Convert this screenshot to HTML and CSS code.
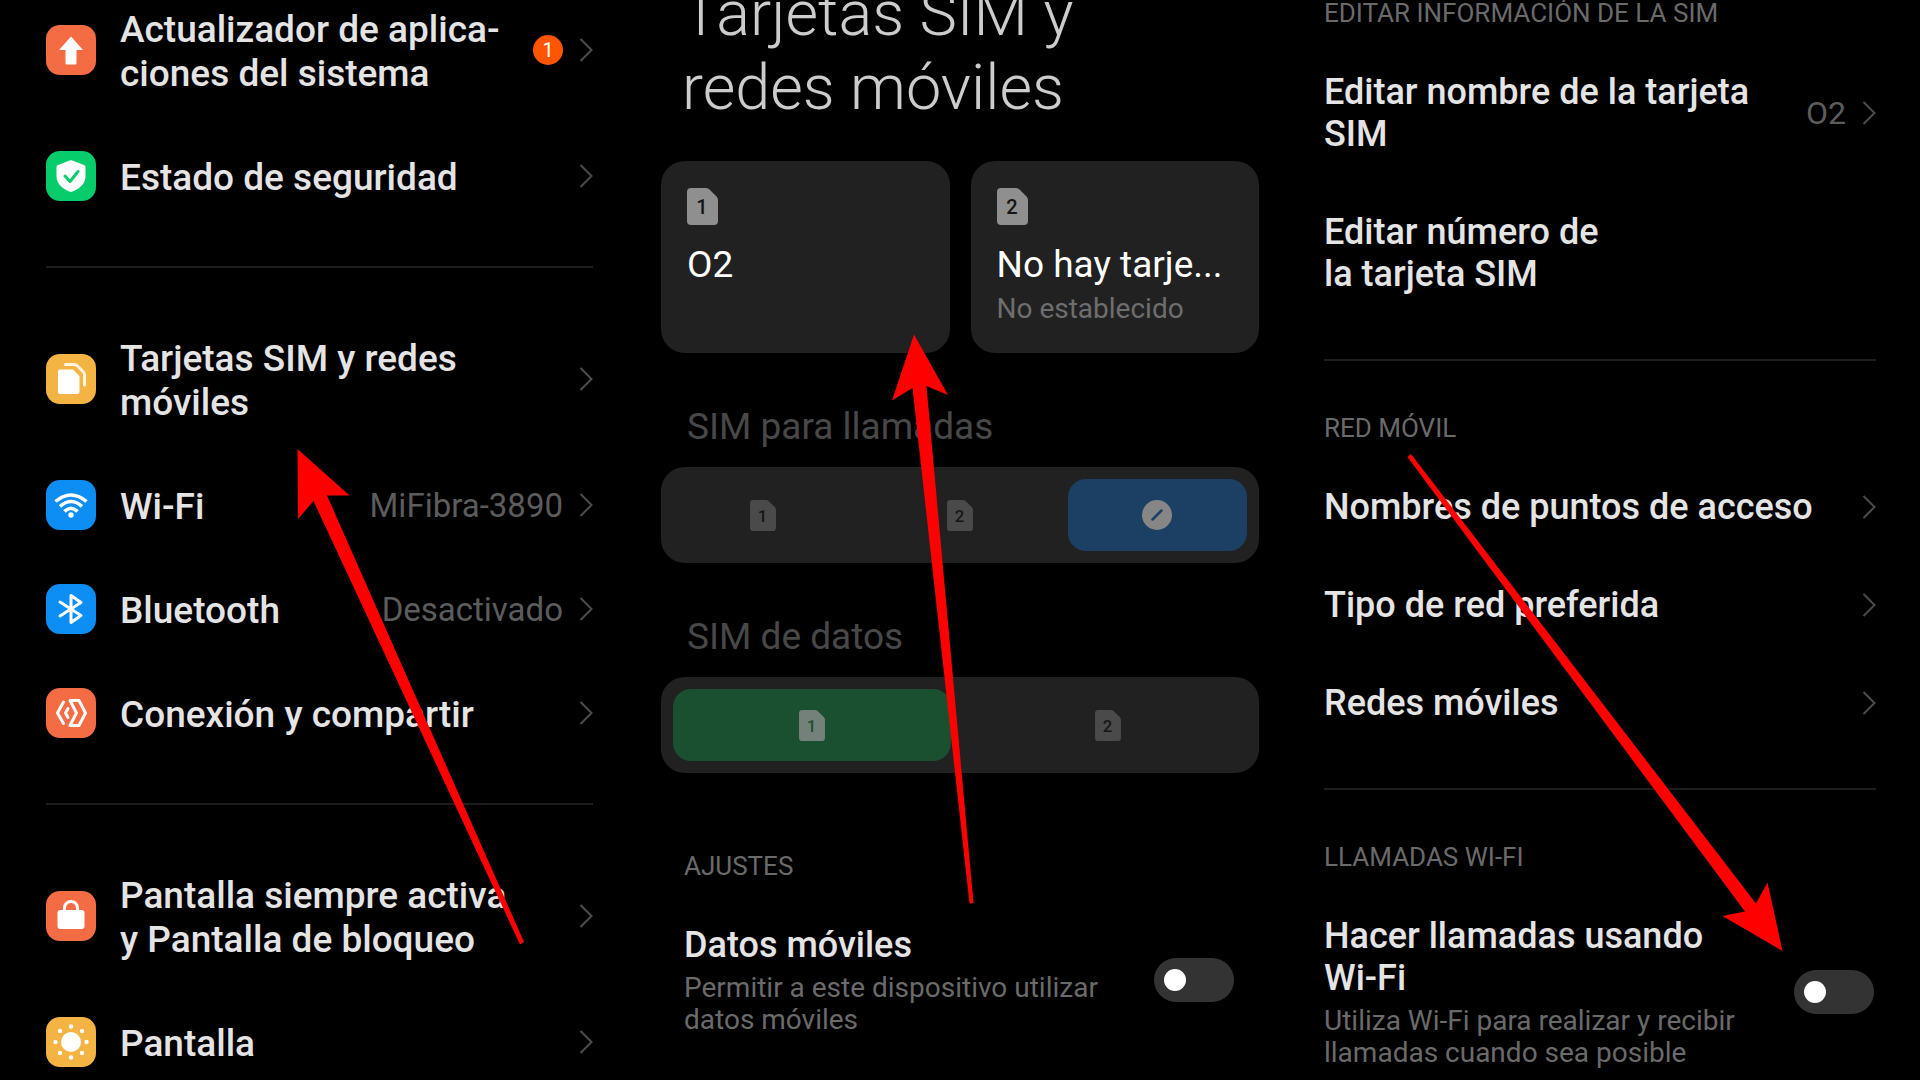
FILE: index.html
```html
<!DOCTYPE html>
<html lang="es">
<head>
    <meta charset="UTF-8">
    <meta name="viewport" content="width=device-width, initial-scale=1.0">
    <title>Ajustes - Llamadas Wi-Fi</title>
    <link rel="stylesheet" href="styles.css">
</head>
<body>
    <!-- Shared shapes -->
    <svg class="defs" aria-hidden="true">
        <symbol id="chevron" viewBox="0 0 14 24"><path d="M1.500 1L12.500 12L1.500 23" fill="none" stroke="#4c4c4c" stroke-width="2"/></symbol>
        <symbol id="sim" viewBox="0 0 31 37"><path d="M4 0H19Q21 0 22.500 1.500L29.500 8.500Q31 10 31 12V33a4 4 0 0 1-4 4H4a4 4 0 0 1-4-4V4a4 4 0 0 1 4-4z"/></symbol>
    </svg>

    <main class="screens">
        <!-- Settings -->
        <section class="screen settings">
            <a class="row" href="#">
                <svg class="icon orange" viewBox="0 0 50 50"><path d="M25 11.500L37 25H30.500V38a1.500 1.500 0 0 1-1.500 1.500H21a1.500 1.500 0 0 1-1.500-1.500V25H13z" fill="#fff"/></svg>
                <span class="label">Actualizador de aplica&shy;ciones del sistema</span>
                <span class="badge">1</span>
                <svg class="chevron"><use href="#chevron"/></svg>
            </a>
            <a class="row" href="#">
                <svg class="icon green" viewBox="0 0 50 50"><path d="M25 9L38 14Q39.500 14.500 39.500 16V25C39.500 33 33 38.500 25 41C17 38.500 10.500 33 10.500 25V16Q10.500 14.500 12 14z" fill="#fff"/><path d="M19 25L24 30.500L32 20.500" fill="none" stroke="#06cc6c" stroke-width="3" stroke-linecap="round" stroke-linejoin="round"/></svg>
                <span class="label">Estado de seguridad</span>
                <svg class="chevron"><use href="#chevron"/></svg>
            </a>
            <hr>
            <a class="row" href="#">
                <svg class="icon yellow" viewBox="0 0 50 50"><path d="M14 15.500H27L33.500 22V38a2 2 0 0 1-2 2H14a2 2 0 0 1-2-2V17.500a2 2 0 0 1 2-2z" fill="#fff"/><path d="M19.500 10.500H28Q30 10.500 31.500 12L37 17.500Q38.500 19 38.500 21V31" fill="none" stroke="#fff6e0" stroke-width="3" stroke-linecap="round"/></svg>
                <span class="label">Tarjetas SIM y redes móviles</span>
                <svg class="chevron"><use href="#chevron"/></svg>
            </a>
            <a class="row" href="#">
                <svg class="icon blue" viewBox="0 0 50 50"><g fill="none" stroke="#fff" stroke-width="3.500"><path d="M9.500 21.500Q25 8.500 40.500 21.500"/><path d="M14 26.500Q25 16.500 36 26.500"/><path d="M18.500 31.500Q25 25 31.500 31.500"/></g><circle cx="25" cy="35" r="2.700" fill="#fff"/></svg>
                <span class="label">Wi-Fi</span>
                <span class="value">MiFibra-3890</span>
                <svg class="chevron"><use href="#chevron"/></svg>
            </a>
            <a class="row" href="#">
                <svg class="icon blue" viewBox="0 0 50 50"><path d="M14 18L35 31.500L25 38.500V11.500L35 18.500L14 32" fill="none" stroke="#fff" stroke-width="3" stroke-linecap="round" stroke-linejoin="round"/></svg>
                <span class="label">Bluetooth</span>
                <span class="value">Desactivado</span>
                <svg class="chevron"><use href="#chevron"/></svg>
            </a>
            <a class="row" href="#">
                <svg class="icon orange" viewBox="0 0 50 50"><g fill="none" stroke="#fff" stroke-width="3" stroke-linecap="round" stroke-linejoin="round"><path d="M17.500 14L11.500 25L17.500 35.500"/><path d="M24 12.500H33L39.500 25L33 37.500H24L30.500 25z"/><path d="M22 20.500L19.500 25L22 29.500"/></g></svg>
                <span class="label">Conexión y compartir</span>
                <svg class="chevron"><use href="#chevron"/></svg>
            </a>
            <hr>
            <a class="row" href="#">
                <svg class="icon orange" viewBox="0 0 50 50"><rect x="11.500" y="19" width="27" height="19" rx="3" fill="#fff"/><path d="M18.500 21V17a6.500 6.500 0 0 1 13 0V21" fill="none" stroke="#fff" stroke-width="3"/></svg>
                <span class="label">Pantalla siempre activa<br>y Pantalla de bloqueo</span>
                <svg class="chevron"><use href="#chevron"/></svg>
            </a>
            <a class="row" href="#">
                <svg class="icon yellow" viewBox="0 0 50 50"><g fill="#fff"><circle cx="25" cy="25" r="10"/><circle cx="25" cy="9.500" r="2.200"/><circle cx="25" cy="40.500" r="2.200"/><circle cx="9.500" cy="25" r="2.200"/><circle cx="40.500" cy="25" r="2.200"/><circle cx="14" cy="14" r="2.200"/><circle cx="36" cy="14" r="2.200"/><circle cx="14" cy="36" r="2.200"/><circle cx="36" cy="36" r="2.200"/></g></svg>
                <span class="label">Pantalla</span>
                <svg class="chevron"><use href="#chevron"/></svg>
            </a>
        </section>

        <!-- SIM cards -->
        <section class="screen sims">
            <h1>Tarjetas SIM y<br>redes móviles</h1>
            <div class="cards">
                <button class="card" type="button">
                    <svg class="card-sim" viewBox="0 0 31 37"><use href="#sim"/><text x="15" y="26">1</text></svg>
                    <span class="card-name">O2</span>
                </button>
                <button class="card" type="button">
                    <svg class="card-sim" viewBox="0 0 31 37"><use href="#sim"/><text x="15" y="26">2</text></svg>
                    <span class="card-name">No hay tarje...</span>
                    <span class="card-note">No establecido</span>
                </button>
            </div>

            <fieldset class="picker" disabled>
                <legend>SIM para llamadas</legend>
                <div class="segments">
                    <label><input type="radio" name="calls" aria-label="SIM 1"><svg class="seg-sim" viewBox="0 0 31 37"><use href="#sim"/><text x="15" y="26">1</text></svg></label>
                    <label><input type="radio" name="calls" aria-label="SIM 2"><svg class="seg-sim" viewBox="0 0 31 37"><use href="#sim"/><text x="15" y="26">2</text></svg></label>
                    <label class="on-blue"><input type="radio" name="calls" aria-label="Ninguna" checked><svg class="seg-none" viewBox="0 0 30 30"><circle cx="15" cy="15" r="15" fill="#868686"/><path d="M10.500 19.500L19.500 10.500" stroke="#1c4064" stroke-width="2.500" stroke-linecap="round"/></svg></label>
                </div>
            </fieldset>
            <fieldset class="picker" disabled>
                <legend>SIM de datos</legend>
                <div class="segments">
                    <label class="on-green"><input type="radio" name="data" aria-label="SIM 1" checked><svg class="seg-sim" viewBox="0 0 31 37"><use href="#sim"/><text x="15" y="26">1</text></svg></label>
                    <label><input type="radio" name="data" aria-label="SIM 2"><svg class="seg-sim" viewBox="0 0 31 37"><use href="#sim"/><text x="15" y="26">2</text></svg></label>
                </div>
            </fieldset>

            <div class="group">
                <h2>AJUSTES</h2>
                <label class="row">
                    <span class="text">
                        <span class="label">Datos móviles</span>
                        <span class="note">Permitir a este dispositivo utilizar datos móviles</span>
                    </span>
                    <input class="switch" type="checkbox" role="switch">
                </label>
            </div>
        </section>

        <!-- SIM details -->
        <section class="screen details">
            <h2>EDITAR INFORMACIÓN DE LA SIM</h2>
            <a class="row" href="#">
                <span class="label">Editar nombre de la tarjeta SIM</span>
                <span class="value">O2</span>
                <svg class="chevron"><use href="#chevron"/></svg>
            </a>
            <a class="row" href="#">
                <span class="label">Editar número de<br>la tarjeta SIM</span>
            </a>
            <hr>
            <h2>RED MÓVIL</h2>
            <a class="row" href="#">
                <span class="label">Nombres de puntos de acceso</span>
                <svg class="chevron"><use href="#chevron"/></svg>
            </a>
            <a class="row" href="#">
                <span class="label">Tipo de red preferida</span>
                <svg class="chevron"><use href="#chevron"/></svg>
            </a>
            <a class="row" href="#">
                <span class="label">Redes móviles</span>
                <svg class="chevron"><use href="#chevron"/></svg>
            </a>
            <hr>
            <h2>LLAMADAS WI-FI</h2>
            <label class="row">
                <span class="text">
                    <span class="label">Hacer llamadas usando<br>Wi-Fi</span>
                    <span class="note">Utiliza Wi-Fi para realizar y recibir llamadas cuando sea posible</span>
                </span>
                <input class="switch" type="checkbox" role="switch">
            </label>
        </section>
    </main>

    <!-- Arrows that mark each step -->
    <svg class="arrows" viewBox="0 0 1920 1080" aria-hidden="true">
        <path d="M297.500 449L349.500 495.500L327 495.500L524 942L520 944.500L313.500 501L298 519z"/>
        <path d="M914 334.500L948 395L926.500 386L973.500 903L969.500 903.500L912.500 388L892 400.500z"/>
        <path d="M1782.500 951L1722.500 916L1745 911.500L1407.500 457L1411 454L1756 903.500L1767.500 882.500z"/>
    </svg>
</body>
</html>
```

FILE: styles.css
```css
* {
    box-sizing: border-box;
}
body {
    margin: 0;
    height: 100vh;
    overflow: hidden;
    background-color: #000;
    color: #e4e4e4;
    font-family: Roboto, "Liberation Sans", sans-serif;
}
.defs {
    display: none;
}
.screens {
    display: grid;
    grid-template-columns: repeat(3, minmax(0, 1fr));
}

/* Each screen is scrolled a little past its top */
.settings {
    margin-top: -24px;
    padding: 0 47px 0 46px;
}
.sims {
    margin-top: -23px;
    padding: 0 21px;
}
.details {
    margin-top: -54px;
    padding: 0 44px;
}

.row {
    display: flex;
    align-items: center;
    gap: 16px;
    padding: 28px 0;
    color: inherit;
    text-decoration: none;
}
.label {
    flex: 1;
    font-size: 36px;
    font-weight: 500;
    line-height: 42px;
}
.settings .label {
    padding-top: 4px;
    font-size: 37px;
    line-height: 44px;
}
.value {
    font-size: 32px;
    color: #5c5c5c;
}
.settings .value {
    font-size: 33px;
}
.chevron {
    width: 14px;
    height: 24px;
    flex: none;
}
hr {
    height: 2px;
    margin: 38px 0 37px;
    border: none;
    background-color: #1e1e1e;
}
.details hr {
    margin: 36px 0 0;
}
h2 {
    margin: 0;
    padding: 51px 0 14px;
    font-size: 26px;
    font-weight: 400;
    line-height: 32px;
    color: #6a6a6a;
}

.icon {
    width: 50px;
    height: 50px;
    margin: -1px 8px -1px 0;
    border-radius: 14px;
    flex: none;
}
.orange {
    background-color: #f46c43;
}
.green {
    background-color: #06cc6c;
}
.yellow {
    background-color: #f4b444;
}
.blue {
    background-color: #0c8ef4;
}
.badge {
    width: 30px;
    height: 30px;
    border-radius: 50%;
    background-color: #ff5400;
    color: #fff;
    font-size: 20px;
    line-height: 30px;
    text-align: center;
}

h1 {
    margin: 0 21px 36px;
    font-size: 63px;
    font-weight: 300;
    line-height: 74px;
    color: #ccc;
}
.cards {
    display: grid;
    grid-template-columns: 1fr 1fr;
    gap: 21px;
}
.card {
    display: flex;
    flex-direction: column;
    align-items: flex-start;
    min-width: 0;
    padding: 27px 26px 28px;
    border: none;
    border-radius: 24px;
    background-color: #212121;
    color: #fff;
    font-family: inherit;
    text-align: left;
}
.card-sim {
    width: 31px;
    height: 37px;
    margin-bottom: 18px;
    fill: #8f8f8f;
}
.card-sim text,
.seg-sim text {
    font-size: 20px;
    font-weight: 500;
    text-anchor: middle;
    fill: #151515;
}
.card-name {
    white-space: nowrap;
    font-size: 37px;
    line-height: 44px;
}
.card-note {
    margin-top: 6px;
    font-size: 28px;
    line-height: 32px;
    color: #6e6e6e;
}

.picker {
    min-width: 0;
    margin: 52px 0 0;
    padding: 0;
    border: none;
}
.picker legend {
    padding: 0 26px 18px;
    font-size: 37px;
    line-height: 44px;
    color: #484848;
}
.segments {
    display: flex;
    gap: 18px;
    padding: 12px;
    border-radius: 24px;
    background-color: #212121;
}
.segments label {
    display: flex;
    flex: 1;
    align-items: center;
    justify-content: center;
    height: 72px;
    border-radius: 18px;
}
.segments input {
    appearance: none;
    width: 0;
    height: 0;
    margin: 0;
}
.on-blue {
    background-color: #1c4064;
}
.on-green {
    background-color: #1a5030;
}
.seg-sim {
    width: 26px;
    height: 31px;
    fill: #4a4a4a;
}
.seg-none {
    width: 30px;
    height: 30px;
}
.on-green .seg-sim {
    fill: #74807a;
}
.on-green .seg-sim text {
    fill: #1a5030;
}
.group {
    margin-top: 26px;
    padding: 0 23px;
}

.text {
    display: flex;
    flex: 1;
    flex-direction: column;
    gap: 6px;
    padding-right: 40px;
}
.note {
    font-size: 28px;
    line-height: 32px;
    color: #6a6a6a;
}
.switch {
    appearance: none;
    display: flex;
    align-items: center;
    width: 80px;
    height: 44px;
    margin: 0 2px 0 0;
    padding: 0 10px;
    border-radius: 22px;
    background-color: #333;
    flex: none;
}
.switch::before {
    content: "";
    width: 22px;
    height: 22px;
    border-radius: 50%;
    background-color: #fff;
}
.switch:checked {
    justify-content: flex-end;
    background-color: #0c8ef4;
}

.arrows {
    position: absolute;
    top: 0;
    left: 0;
    width: 100%;
    fill: #f00;
    pointer-events: none;
}
```
